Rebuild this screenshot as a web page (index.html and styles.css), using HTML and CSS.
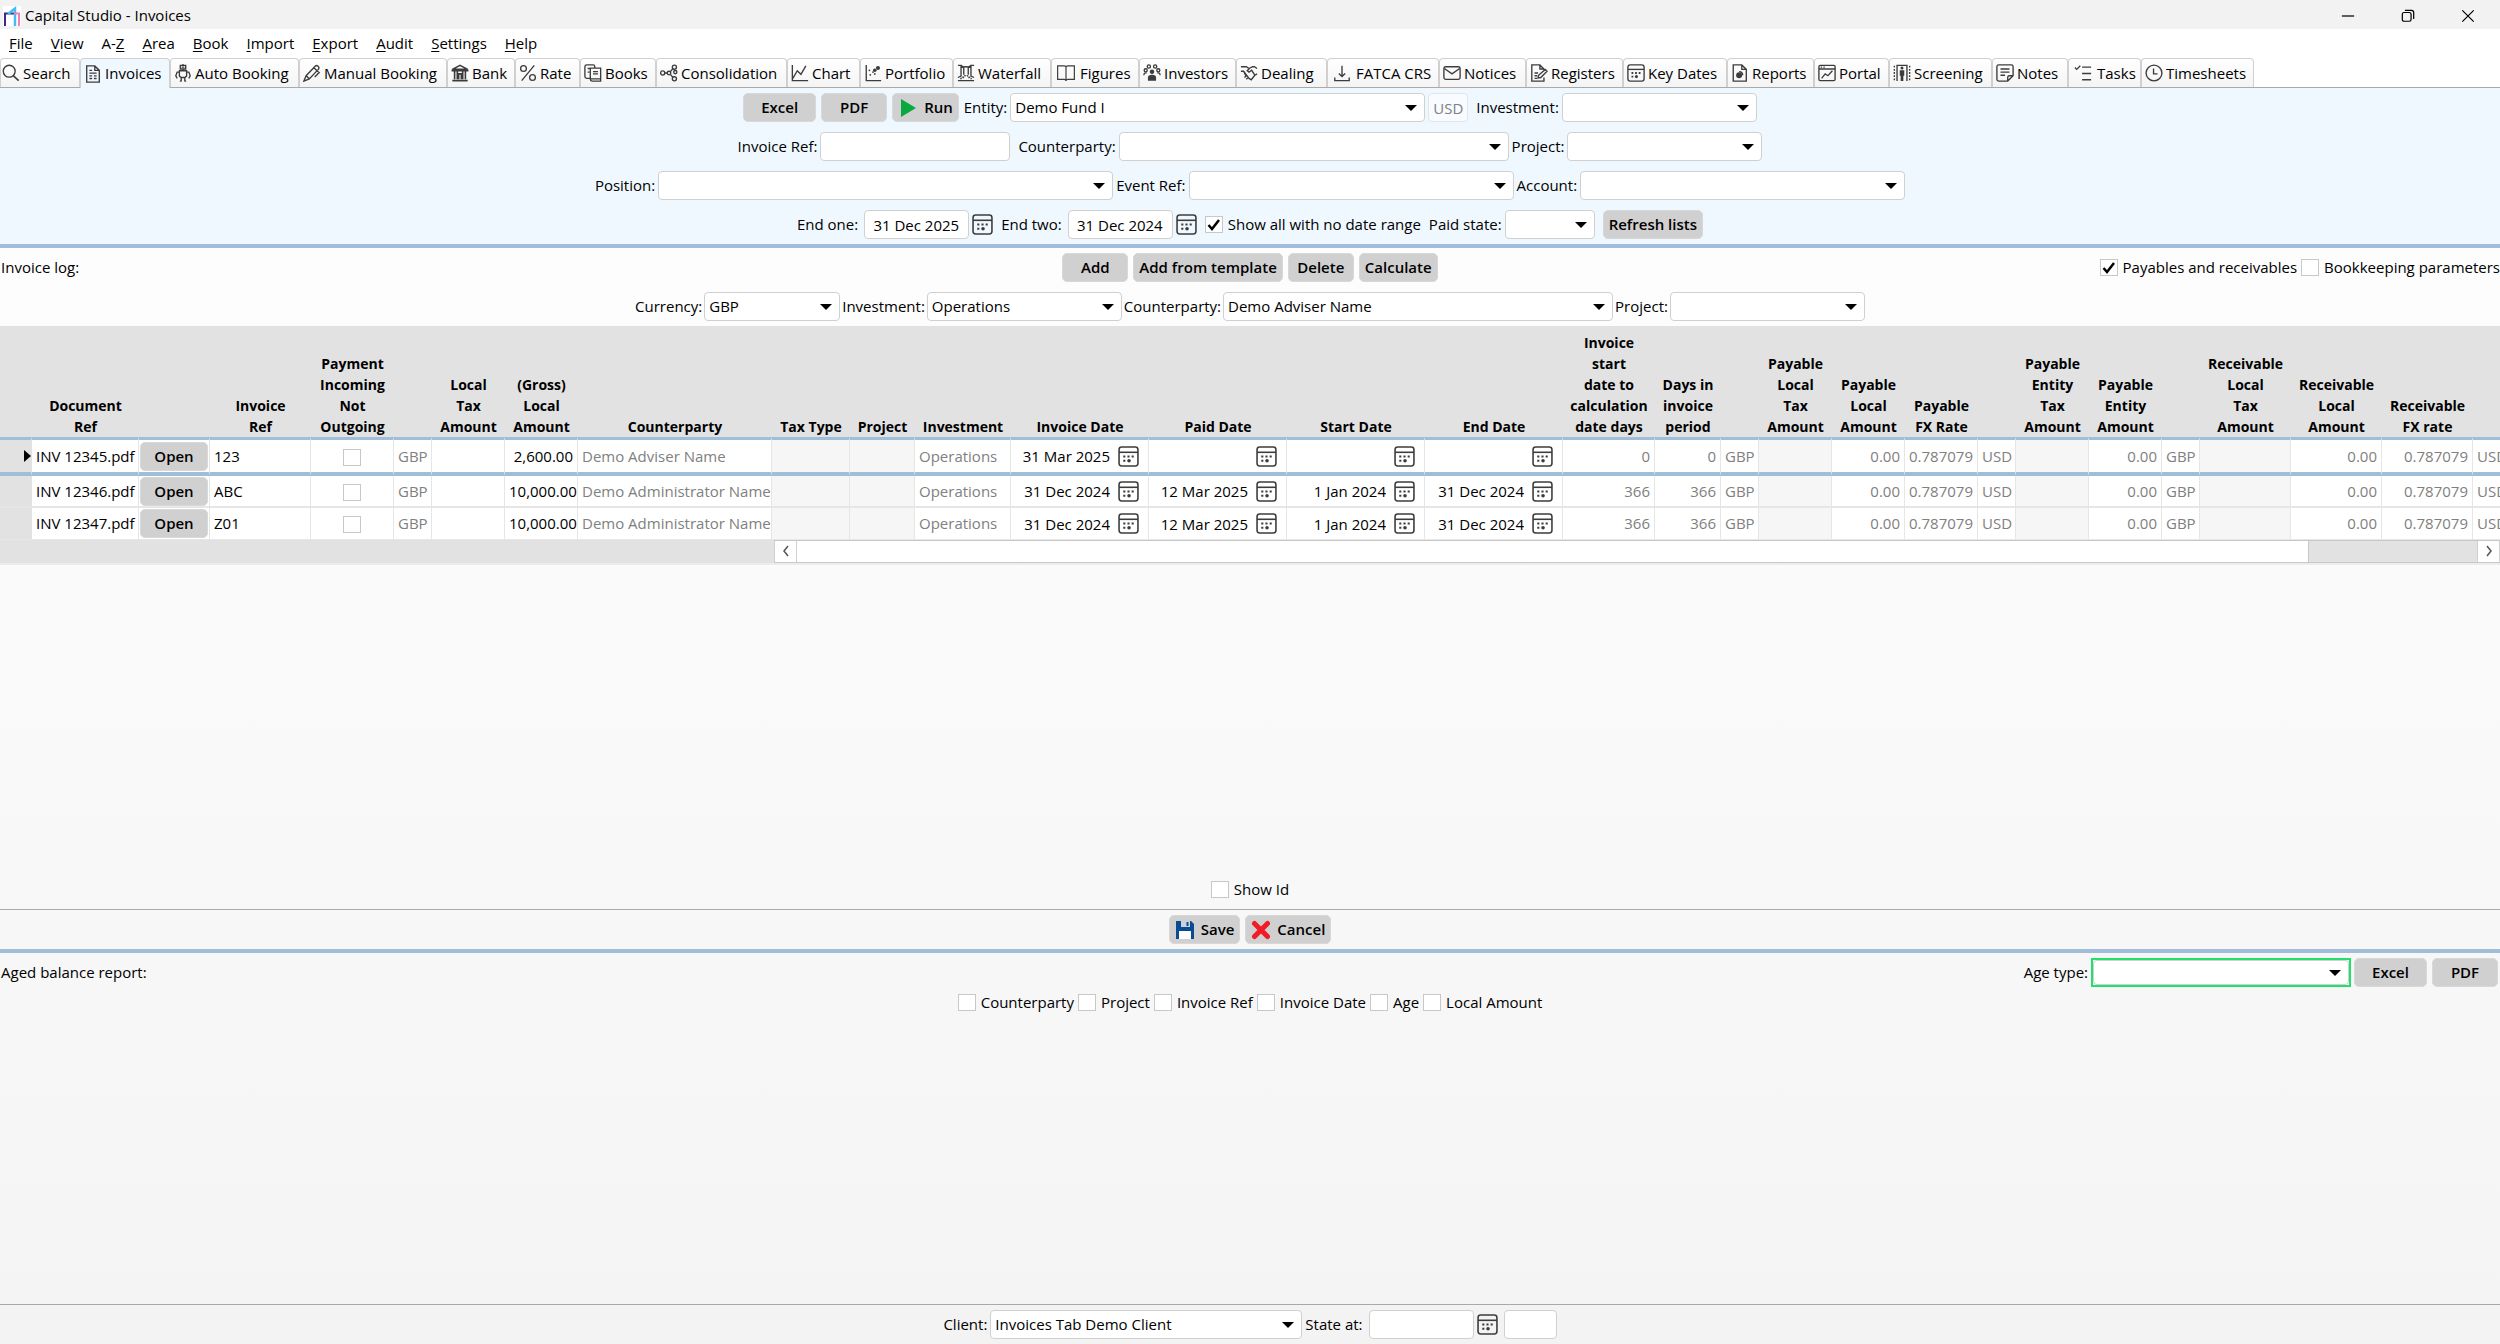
FILE: index.html
```html
<!DOCTYPE html>
<html lang="en">
<head>
  <meta charset="UTF-8" />
  <meta name="viewport" content="width=device-width, initial-scale=1.0" />
  <title>Capital Studio - Invoices</title>
  <link rel="stylesheet" href="styles.css">
</head>
<body>
  <!-- icon sprite -->
  <svg class="sprite" aria-hidden="true">
    <symbol id="i-search" viewBox="0 0 20 20"><circle cx="8" cy="8" r="6.6"/><path d="M12.5 13l6 5.5" stroke-width="1.8"/></symbol>
    <symbol id="i-invoice" viewBox="0 0 20 20"><path d="M3 1h9l5 5v13H3zM12 1v5h5M6 6h3M6 9h8M6 12h3M11 12h3M6 15h3M11 15h3"/></symbol>
    <symbol id="i-robot" viewBox="0 0 20 20"><path d="M7 1.5h6v4H7zM10 0v1M10 5.500v2M6 7.500h8v6l-2 1.500H8l-2-1.500zM6 9H3.500L2 13l1.500 3M14 9h2.500l1.500 4-1.500 3M8 15v4M12 15v4M6.500 19h2M11.500 19h2M8.500 3.500h3" /></symbol>
    <symbol id="i-pen" viewBox="0 0 20 20"><path d="M1 19l2.500-6L13.500 2.500c2-2 5.500 1 3.500 3.500L7 16.500zM3.500 13L7 16.500M12 4l4 4M16 8l2 1.500-5 5"/></symbol>
    <symbol id="i-bank" viewBox="0 0 20 20"><path d="M1.500 6L10 1.500 18.500 6zM1.500 6v1.500h17V6M4 8v9M7 8v9M13 8v9M16 8v9M8.500 17v-6h3v6M1.500 18.500h17" stroke-width="1.800"/></symbol>
    <symbol id="i-percent" viewBox="0 0 20 20"><path d="M17 1.500L3 18.500"/><circle cx="5" cy="5" r="3.200"/><circle cx="15" cy="15" r="3.200"/></symbol>
    <symbol id="i-books" viewBox="0 0 20 20"><path d="M7 16H3q-2 0-2-2V3q0-2 2-2h7q2 0 2 2v1M4 5h3M4 9h2M7 4.500h11.500V19H9q-2 0-2-2zM10 8.500h5.500M10 11h5.500M7 16.500h11.500"/></symbol>
    <symbol id="i-nodes" viewBox="0 0 20 20"><circle cx="3" cy="10" r="2.300"/><circle cx="10" cy="10" r="2"/><circle cx="16" cy="3.500" r="2.300"/><circle cx="17" cy="9" r="1.800"/><circle cx="16" cy="16.500" r="2.300"/><path d="M5.300 10H8M11.500 8.500l3-3.500M11.500 11.500l3 3.500"/></symbol>
    <symbol id="i-chart" viewBox="0 0 20 20"><path d="M1.500 1v17.500H19M2 16l5-8.500 4 4L16.500 2"/></symbol>
    <symbol id="i-scatter" viewBox="0 0 20 20"><path d="M2.500 1v17.500H19"/><g class="solid"><circle cx="6" cy="7" r="1"/><circle cx="7" cy="12" r="1"/><circle cx="10" cy="9" r="1"/><circle cx="12" cy="7" r="2"/><circle cx="15.500" cy="4.500" r="2.300"/><circle cx="12" cy="11" r="1"/></g></symbol>
    <symbol id="i-waterfall" viewBox="0 0 20 20"><path d="M1 1.500h3.500v12L1 15M19 1.500h-3.500v12L19 15M4.500 4q5.500-2 11 0M4.500 1.500l3 2.500M15.500 1.500l-3 2.500M7.500 4v8M12.500 4v8M1 18.500h18" /><path d="M4 17q1-3 3-2 1-3 3-1.500 2-1.500 3 1.500 2-1 3 2" stroke-dasharray="2 1"/></symbol>
    <symbol id="i-openbook" viewBox="0 0 20 20"><path d="M.7 2H8q2 0 2 2v15q0-2-2-2H.700zM19.300 2H12q-2 0-2 2v15q0-2 2-2h7.300z" stroke-width="1.300"/></symbol>
    <symbol id="i-people" viewBox="0 0 20 20"><circle cx="6.500" cy="2.800" r="1.800"/><circle cx="13.500" cy="2.800" r="1.800"/><circle cx="3" cy="7" r="1.700"/><circle cx="17" cy="7" r="1.700"/><path d="M1 12.500q0-3 3-2.500M19 12.500q0-3-3-2.500"/><g class="solid"><circle cx="10" cy="8.500" r="2.500"/><path d="M5.500 18.500V15q0-3 4.500-3t4.500 3v3.500z"/></g></symbol>
    <symbol id="i-hands" viewBox="0 0 20 20"><path d="M1 3h6l3 2 4-2h2l3 2M1 8h3l6 8 2.500 1.500 4-5L13 7l-3 2-2-1.500L10.500 5M16.500 12.500L19 11M4 8l3 6M7 13l-2 2M9 15l-2 2"/></symbol>
    <symbol id="i-download" viewBox="0 0 20 20"><path d="M10 2v12M6.500 10.500L10 14l3.500-3.500M2 15v3.500h16V15"/></symbol>
    <symbol id="i-mail" viewBox="0 0 20 20"><rect x="1" y="3" width="18" height="14" rx="2"/><path d="M1.500 5l8.500 6 8.500-6"/></symbol>
    <symbol id="i-register" viewBox="0 0 20 20"><path d="M15.500 15v4H2V1h9l4.500 4.500V8M11 1v4.500h4.500M5 10h4M5 13h3M9 15.500l.5-3L17 6l2 2-7 7zM5 16h3"/></symbol>
    <symbol id="i-calendar" viewBox="0 0 20 20"><rect x="1" y="1" width="18" height="18" rx="2.500"/><path d="M1 6h18"/><path d="M5 10h2M9 10h2M13 10h2M5 14h2" stroke-width="2"/><circle class="solid" cx="10.500" cy="14" r="1.700"/></symbol>
    <symbol id="i-report" viewBox="0 0 20 20"><path d="M2.500 1h9.500l5 5v13H2.500zM12 1v5h5"/><circle class="solid" cx="9" cy="12.500" r="3.300"/><path d="M9 8.500q4 0 4 4"/></symbol>
    <symbol id="i-portal" viewBox="0 0 20 20"><rect x="1" y="1.500" width="18" height="17" rx="1.500"/><path d="M1 5.500h18M3 3.500h1.500M6 3.500h1.500M4 16l4-5 3 2 5-5.500"/></symbol>
    <symbol id="i-scan" viewBox="0 0 20 20"><path d="M4.500 19V1.500h11V19"/><path d="M1.500 2v17M18.500 2v17" stroke-dasharray="2 1.500"/><g class="solid"><circle cx="10" cy="4.500" r="1.700"/><path d="M7.500 7h5v6h-1v6H8.500v-6h-1z"/></g></symbol>
    <symbol id="i-note" viewBox="0 0 20 20"><path d="M3 1h14q2 0 2 2v10l-6 6H3q-2 0-2-2V3q0-2 2-2zM19 13h-4q-2 0-2 2v4M5 5.500h10M5 9h10M5 12.500h5"/></symbol>
    <symbol id="i-tasks" viewBox="0 0 20 20"><path d="M1 4l2 2 4-4M9 3.500h10M9 10.500h10M9 17.500h10"/></symbol>
    <symbol id="i-clock" viewBox="0 0 20 20"><circle cx="10" cy="10" r="8.800"/><path d="M9.500 5v6H14"/></symbol>
  </svg>

  <header class="title-bar">
    <svg class="logo" viewBox="0 0 18 20" aria-hidden="true">
      <path d="M2 20V7.500h11" fill="none" stroke="#3b2a8c" stroke-width="2"/>
      <path d="M5 8l7-5.500V20" fill="none" stroke="#45bdee" stroke-width="2.500"/>
      <path d="M11 7.500h5V20" fill="none" stroke="#f07fb4" stroke-width="2"/>
    </svg>
    <h1>Capital Studio - Invoices</h1>
    <div class="window-buttons">
      <button type="button" aria-label="Minimise"><svg viewBox="0 0 16 16"><path d="M1 8h14"/></svg></button>
      <button type="button" aria-label="Restore"><svg viewBox="0 0 16 16"><rect x="1.500" y="4" width="10" height="10" rx="2"/><path d="M4.500 1.500H12q2.500 0 2.500 2.500v7.500"/></svg></button>
      <button type="button" aria-label="Close"><svg viewBox="0 0 16 16"><path d="M1.500 1.500l13 13M14.500 1.500l-13 13"/></svg></button>
    </div>
  </header>

  <nav class="menu">
    <a href="#"><u>F</u>ile</a>
    <a href="#"><u>V</u>iew</a>
    <a href="#">A-<u>Z</u></a>
    <a href="#"><u>A</u>rea</a>
    <a href="#"><u>B</u>ook</a>
    <a href="#"><u>I</u>mport</a>
    <a href="#"><u>E</u>xport</a>
    <a href="#"><u>A</u>udit</a>
    <a href="#"><u>S</u>ettings</a>
    <a href="#"><u>H</u>elp</a>
  </nav>

  <nav class="tabs">
    <a href="#" class="tab"><svg class="icon"><use href="#i-search"/></svg>Search</a>
    <a href="#" class="tab active"><svg class="icon"><use href="#i-invoice"/></svg>Invoices</a>
    <a href="#" class="tab"><svg class="icon"><use href="#i-robot"/></svg>Auto Booking</a>
    <a href="#" class="tab"><svg class="icon"><use href="#i-pen"/></svg>Manual Booking</a>
    <a href="#" class="tab"><svg class="icon"><use href="#i-bank"/></svg>Bank</a>
    <a href="#" class="tab"><svg class="icon"><use href="#i-percent"/></svg>Rate</a>
    <a href="#" class="tab"><svg class="icon"><use href="#i-books"/></svg>Books</a>
    <a href="#" class="tab"><svg class="icon"><use href="#i-nodes"/></svg>Consolidation</a>
    <a href="#" class="tab"><svg class="icon"><use href="#i-chart"/></svg>Chart</a>
    <a href="#" class="tab"><svg class="icon"><use href="#i-scatter"/></svg>Portfolio</a>
    <a href="#" class="tab"><svg class="icon"><use href="#i-waterfall"/></svg>Waterfall</a>
    <a href="#" class="tab"><svg class="icon wide"><use href="#i-openbook"/></svg>Figures</a>
    <a href="#" class="tab"><svg class="icon"><use href="#i-people"/></svg>Investors</a>
    <a href="#" class="tab"><svg class="icon"><use href="#i-hands"/></svg>Dealing</a>
    <a href="#" class="tab"><svg class="icon wide"><use href="#i-download"/></svg>FATCA CRS</a>
    <a href="#" class="tab"><svg class="icon"><use href="#i-mail"/></svg>Notices</a>
    <a href="#" class="tab"><svg class="icon"><use href="#i-register"/></svg>Registers</a>
    <a href="#" class="tab"><svg class="icon"><use href="#i-calendar"/></svg>Key Dates</a>
    <a href="#" class="tab"><svg class="icon"><use href="#i-report"/></svg>Reports</a>
    <a href="#" class="tab"><svg class="icon"><use href="#i-portal"/></svg>Portal</a>
    <a href="#" class="tab"><svg class="icon"><use href="#i-scan"/></svg>Screening</a>
    <a href="#" class="tab"><svg class="icon"><use href="#i-note"/></svg>Notes</a>
    <a href="#" class="tab"><svg class="icon wide"><use href="#i-tasks"/></svg>Tasks</a>
    <a href="#" class="tab"><svg class="icon"><use href="#i-clock"/></svg>Timesheets</a>
  </nav>

  <form class="filters">
    <div class="form-row">
      <button type="button" class="btn excel">Excel</button>
      <button type="button" class="btn">PDF</button>
      <button type="button" class="btn with-icon"><svg class="btn-icon" viewBox="0 0 20 20"><path d="M3 1l15 9-15 9z" fill="#0aa83f"/></svg>Run</button>
      <label for="entity">Entity:</label>
      <select id="entity" class="w-415"><option>Demo Fund I</option></select>
      <input type="text" class="w-40" value="USD" aria-label="Entity currency" disabled />
      <label for="investment" class="spaced">Investment:</label>
      <select id="investment" class="w-195"><option></option></select>
    </div>
    <div class="form-row">
      <label for="invoice-ref">Invoice Ref:</label>
      <input type="text" id="invoice-ref" class="w-190" />
      <label for="counterparty" class="spaced">Counterparty:</label>
      <select id="counterparty" class="w-390"><option></option></select>
      <label for="project">Project:</label>
      <select id="project" class="w-195"><option></option></select>
    </div>
    <div class="form-row">
      <label for="position">Position:</label>
      <select id="position" class="w-455"><option></option></select>
      <label for="event-ref">Event Ref:</label>
      <select id="event-ref" class="w-325"><option></option></select>
      <label for="account">Account:</label>
      <select id="account" class="w-325"><option></option></select>
    </div>
    <div class="form-row">
      <label for="end-one">End one:</label>
      <input type="text" id="end-one" class="date w-105" value="31 Dec 2025" />
      <button type="button" class="cal" aria-label="Pick end one"><svg><use href="#i-calendar"/></svg></button>
      <label for="end-two" class="spaced">End two:</label>
      <input type="text" id="end-two" class="date w-105" value="31 Dec 2024" />
      <button type="button" class="cal" aria-label="Pick end two"><svg><use href="#i-calendar"/></svg></button>
      <label class="check spaced"><input type="checkbox" checked />Show all with no date range</label>
      <label for="paid-state" class="spaced">Paid state:</label>
      <select id="paid-state" class="w-90"><option></option></select>
      <button type="button" class="btn spaced">Refresh lists</button>
    </div>
  </form>

  <main class="log">
    <div class="toolbar">
      <h2>Invoice log:</h2>
      <div class="form-row">
        <button type="button" class="btn">Add</button>
        <button type="button" class="btn">Add from template</button>
        <button type="button" class="btn">Delete</button>
        <button type="button" class="btn">Calculate</button>
      </div>
      <div class="toolbar-end">
        <label class="check"><input type="checkbox" checked />Payables and receivables</label>
        <label class="check"><input type="checkbox" />Bookkeeping parameters</label>
      </div>
    </div>
    <div class="form-row defaults">
      <label for="log-currency">Currency:</label>
      <select id="log-currency" class="w-136"><option>GBP</option></select>
      <label for="log-investment">Investment:</label>
      <select id="log-investment" class="w-195"><option>Operations</option></select>
      <label for="log-counterparty">Counterparty:</label>
      <select id="log-counterparty" class="w-390"><option>Demo Adviser Name</option></select>
      <label for="log-project">Project:</label>
      <select id="log-project" class="w-195"><option></option></select>
    </div>

    <div class="grid">
      <table>
        <colgroup>
          <col class="c-marker"><col class="c-doc"><col class="c-open"><col class="c-ref"><col class="c-pay">
          <col class="c-cur"><col class="c-amount"><col class="c-amount"><col class="c-party"><col class="c-tax">
          <col class="c-project"><col class="c-invest">
          <col class="c-date"><col class="c-date"><col class="c-date"><col class="c-date">
          <col class="c-calc"><col class="c-days"><col class="c-cur">
          <col class="c-amount"><col class="c-amount"><col class="c-amount"><col class="c-cur">
          <col class="c-amount"><col class="c-amount"><col class="c-cur">
          <col class="c-recv"><col class="c-recv"><col class="c-recv"><col class="c-cur">
        </colgroup>
        <thead>
          <tr>
            <th></th>
            <th>Document<br>Ref</th>
            <th></th>
            <th>Invoice<br>Ref</th>
            <th>Payment<br>Incoming<br>Not<br>Outgoing</th>
            <th></th>
            <th>Local<br>Tax<br>Amount</th>
            <th>(Gross)<br>Local<br>Amount</th>
            <th>Counterparty</th>
            <th>Tax Type</th>
            <th>Project</th>
            <th>Investment</th>
            <th>Invoice Date</th>
            <th>Paid Date</th>
            <th>Start Date</th>
            <th>End Date</th>
            <th>Invoice<br>start<br>date to<br>calculation<br>date days</th>
            <th>Days in<br>invoice<br>period</th>
            <th></th>
            <th>Payable<br>Local<br>Tax<br>Amount</th>
            <th>Payable<br>Local<br>Amount</th>
            <th>Payable<br>FX Rate</th>
            <th></th>
            <th>Payable<br>Entity<br>Tax<br>Amount</th>
            <th>Payable<br>Entity<br>Amount</th>
            <th></th>
            <th>Receivable<br>Local<br>Tax<br>Amount</th>
            <th>Receivable<br>Local<br>Amount</th>
            <th>Receivable<br>FX rate</th>
            <th></th>
          </tr>
        </thead>
        <tbody>
          <tr class="selected">
            <td class="marker"><svg viewBox="0 0 7 12"><path d="M0 0l7 6-7 6z"/></svg></td>
            <td>INV 12345.pdf</td>
            <td class="open"><button type="button" class="btn">Open</button></td>
            <td>123</td>
            <td class="tick"><input type="checkbox" aria-label="Payment incoming" /></td>
            <td class="dim">GBP</td>
            <td></td>
            <td class="num">2,600.00</td>
            <td class="dim">Demo Adviser Name</td>
            <td class="off"></td>
            <td class="off"></td>
            <td class="dim">Operations</td>
            <td><div class="date-cell"><input type="text" value="31 Mar 2025" aria-label="Invoice date" /><button type="button" class="cal" aria-label="Pick date"><svg><use href="#i-calendar"/></svg></button></div></td>
            <td><div class="date-cell"><input type="text" aria-label="Paid date" /><button type="button" class="cal" aria-label="Pick date"><svg><use href="#i-calendar"/></svg></button></div></td>
            <td><div class="date-cell"><input type="text" aria-label="Start date" /><button type="button" class="cal" aria-label="Pick date"><svg><use href="#i-calendar"/></svg></button></div></td>
            <td><div class="date-cell"><input type="text" aria-label="End date" /><button type="button" class="cal" aria-label="Pick date"><svg><use href="#i-calendar"/></svg></button></div></td>
            <td class="dim num">0</td>
            <td class="dim num">0</td>
            <td class="dim">GBP</td>
            <td class="off"></td>
            <td class="dim num">0.00</td>
            <td class="dim num">0.787079</td>
            <td class="dim">USD</td>
            <td class="off"></td>
            <td class="dim num">0.00</td>
            <td class="dim">GBP</td>
            <td class="off"></td>
            <td class="dim num">0.00</td>
            <td class="dim num">0.787079</td>
            <td class="dim">USD</td>
          </tr>
          <tr>
            <td class="marker"></td>
            <td>INV 12346.pdf</td>
            <td class="open"><button type="button" class="btn">Open</button></td>
            <td>ABC</td>
            <td class="tick"><input type="checkbox" aria-label="Payment incoming" /></td>
            <td class="dim">GBP</td>
            <td></td>
            <td class="num">10,000.00</td>
            <td class="dim">Demo Administrator Name</td>
            <td class="off"></td>
            <td class="off"></td>
            <td class="dim">Operations</td>
            <td><div class="date-cell"><input type="text" value="31 Dec 2024" aria-label="Invoice date" /><button type="button" class="cal" aria-label="Pick date"><svg><use href="#i-calendar"/></svg></button></div></td>
            <td><div class="date-cell"><input type="text" value="12 Mar 2025" aria-label="Paid date" /><button type="button" class="cal" aria-label="Pick date"><svg><use href="#i-calendar"/></svg></button></div></td>
            <td><div class="date-cell"><input type="text" value="1 Jan 2024" aria-label="Start date" /><button type="button" class="cal" aria-label="Pick date"><svg><use href="#i-calendar"/></svg></button></div></td>
            <td><div class="date-cell"><input type="text" value="31 Dec 2024" aria-label="End date" /><button type="button" class="cal" aria-label="Pick date"><svg><use href="#i-calendar"/></svg></button></div></td>
            <td class="dim num">366</td>
            <td class="dim num">366</td>
            <td class="dim">GBP</td>
            <td class="off"></td>
            <td class="dim num">0.00</td>
            <td class="dim num">0.787079</td>
            <td class="dim">USD</td>
            <td class="off"></td>
            <td class="dim num">0.00</td>
            <td class="dim">GBP</td>
            <td class="off"></td>
            <td class="dim num">0.00</td>
            <td class="dim num">0.787079</td>
            <td class="dim">USD</td>
          </tr>
          <tr>
            <td class="marker"></td>
            <td>INV 12347.pdf</td>
            <td class="open"><button type="button" class="btn">Open</button></td>
            <td>Z01</td>
            <td class="tick"><input type="checkbox" aria-label="Payment incoming" /></td>
            <td class="dim">GBP</td>
            <td></td>
            <td class="num">10,000.00</td>
            <td class="dim">Demo Administrator Name</td>
            <td class="off"></td>
            <td class="off"></td>
            <td class="dim">Operations</td>
            <td><div class="date-cell"><input type="text" value="31 Dec 2024" aria-label="Invoice date" /><button type="button" class="cal" aria-label="Pick date"><svg><use href="#i-calendar"/></svg></button></div></td>
            <td><div class="date-cell"><input type="text" value="12 Mar 2025" aria-label="Paid date" /><button type="button" class="cal" aria-label="Pick date"><svg><use href="#i-calendar"/></svg></button></div></td>
            <td><div class="date-cell"><input type="text" value="1 Jan 2024" aria-label="Start date" /><button type="button" class="cal" aria-label="Pick date"><svg><use href="#i-calendar"/></svg></button></div></td>
            <td><div class="date-cell"><input type="text" value="31 Dec 2024" aria-label="End date" /><button type="button" class="cal" aria-label="Pick date"><svg><use href="#i-calendar"/></svg></button></div></td>
            <td class="dim num">366</td>
            <td class="dim num">366</td>
            <td class="dim">GBP</td>
            <td class="off"></td>
            <td class="dim num">0.00</td>
            <td class="dim num">0.787079</td>
            <td class="dim">USD</td>
            <td class="off"></td>
            <td class="dim num">0.00</td>
            <td class="dim">GBP</td>
            <td class="off"></td>
            <td class="dim num">0.00</td>
            <td class="dim num">0.787079</td>
            <td class="dim">USD</td>
          </tr>
        </tbody>
      </table>
      <div class="scrollbar">
        <button type="button" aria-label="Scroll left"><svg viewBox="0 0 8 12"><path d="M6 1L2 6l4 5"/></svg></button>
        <div class="track"><div class="thumb"></div></div>
        <button type="button" aria-label="Scroll right"><svg viewBox="0 0 8 12"><path d="M2 1l4 5-4 5"/></svg></button>
      </div>
    </div>

    <div class="form-row show-id">
      <label class="check"><input type="checkbox" />Show Id</label>
    </div>
  </main>

  <div class="form-row actions">
    <button type="button" class="btn with-icon"><svg class="btn-icon" viewBox="0 0 20 20"><path d="M1 1h15l3 3v15H1z" fill="#0a4c92"/><path d="M6 1h9v6H6z" fill="#c9d3de"/><path d="M11.500 2h2v4h-2z" fill="#0a4c92"/><path d="M4 11h12v8H4z" fill="#fff"/></svg>Save</button>
    <button type="button" class="btn with-icon"><svg class="btn-icon" viewBox="0 0 20 20"><path d="M3.500 3.500l13 13M16.500 3.500l-13 13" stroke="#f01c26" stroke-width="5" stroke-linecap="round"/></svg>Cancel</button>
  </div>

  <section class="aged">
    <div class="aged-head">
      <h2>Aged balance report:</h2>
      <div class="form-row">
        <label for="age-type">Age type:</label>
        <span class="focus-ring"><select id="age-type" class="w-256"><option></option></select></span>
        <button type="button" class="btn excel">Excel</button>
        <button type="button" class="btn">PDF</button>
      </div>
    </div>
    <div class="form-row aged-columns">
      <label class="check"><input type="checkbox" />Counterparty</label>
      <label class="check"><input type="checkbox" />Project</label>
      <label class="check"><input type="checkbox" />Invoice Ref</label>
      <label class="check"><input type="checkbox" />Invoice Date</label>
      <label class="check"><input type="checkbox" />Age</label>
      <label class="check"><input type="checkbox" />Local Amount</label>
    </div>
  </section>

  <footer class="form-row status">
    <label for="client">Client:</label>
    <select id="client" class="w-312"><option>Invoices Tab Demo Client</option></select>
    <label for="state-at">State at:</label>
    <input type="text" id="state-at" class="date w-105" />
    <button type="button" class="cal" aria-label="Pick state date"><svg><use href="#i-calendar"/></svg></button>
    <input type="text" class="time" aria-label="State time" />
  </footer>
</body>
</html>
```
FILE: styles.css
```css
* {
  box-sizing: border-box;
}

body {
  margin: 0;
  min-height: 100vh;
  display: flex;
  flex-direction: column;
  overflow-x: hidden;
  font-family: 'Segoe UI', 'Open Sans', 'Noto Sans', sans-serif;
  font-size: 15px;
  line-height: 21px;
  color: #000;
  background: linear-gradient(#fff, #f4f4f4);
}

button, input, select {
  font: inherit;
  color: inherit;
}

button {
  cursor: pointer;
}

a {
  color: inherit;
  text-decoration: none;
}

h1, h2 {
  margin: 0;
  font-size: 15px;
  font-weight: 400;
}

label {
  white-space: nowrap;
}

.sprite {
  display: none;
}

symbol {
  fill: none;
  stroke: #3c3c3c;
  stroke-width: 1.5;
}

symbol .solid {
  fill: #3c3c3c;
  stroke: none;
}

/* title bar */

.title-bar {
  display: flex;
  align-items: center;
  height: 29px;
  padding: 0 2px 0 3px;
  background: #f2f2f2;
}

.logo {
  width: 18px;
  height: 20px;
  margin: 2px 4px 0 0;
  background: #fff;
}

.title-bar h1 {
  padding-top: 2px;
}

.window-buttons {
  display: flex;
  margin-left: auto;
}

.window-buttons button {
  width: 60px;
  height: 28px;
  padding: 0;
  border: 0;
  background: none;
}

.window-buttons svg {
  width: 14px;
  height: 14px;
  vertical-align: middle;
  fill: none;
  stroke: #000;
  stroke-width: 1.4;
}

/* menu and tabs */

.menu {
  display: flex;
  gap: 18px;
  height: 29px;
  padding: 4px 9px;
  background: #fff;
}

.menu u {
  text-underline-offset: 2px;
}

.tabs {
  display: grid;
  grid-template-columns:
    80px 90px 129px 148px 68px 65px 76px 131px 73px 93px 98px 88px
    97px 91px 112px 87px 97px 104px 87px 75px 103px 76px 73px 113px;
  height: 30px;
  background: #fff;
  border-bottom: 1px solid #a9a9a9;
}

.tab {
  display: flex;
  align-items: center;
  gap: 3px;
  height: 29px;
  padding-left: 3px;
  white-space: nowrap;
  border: 1px solid #d0d0d0;
  border-width: 1px 1px 0;
  border-radius: 4px 4px 0 0;
  background: linear-gradient(#fff, #f4f4f4);
}

.tab:first-child {
  padding-left: 1px;
}

.tab.active {
  height: 30px;
  background: #f0f8ff;
}

.icon {
  flex: none;
  width: 18px;
  height: 18px;
}

.icon.wide {
  width: 22px;
}

/* form parts */

.form-row {
  display: flex;
  justify-content: center;
  align-items: center;
  gap: 3px;
  min-height: 29px;
}

.spaced {
  margin-left: 5px;
}

select,
input[type="text"] {
  height: 29px;
  padding: 0 4px;
  border: 1px solid #d0d0d0;
  border-radius: 4px;
  background-color: #fff;
  outline: none;
}

select {
  appearance: none;
  background-image: url("data:image/svg+xml,%3Csvg xmlns='http://www.w3.org/2000/svg' viewBox='0 0 12 6'%3E%3Cpath d='M0 0h12L6 6z'/%3E%3C/svg%3E");
  background-repeat: no-repeat;
  background-position: right 7px center;
  background-size: 12px 6px;
}

input[type="text"]:disabled {
  color: #808080;
  background-color: #f8fbff;
  border-color: #e2e6ea;
}

input.date {
  text-align: right;
  padding-right: 9px;
  margin-left: 3px;
}

input.time {
  width: 53px;
  margin-left: 3px;
}

.w-40 { width: 40px; }
.w-90 { width: 90px; }
.w-105 { width: 105px; }
.w-136 { width: 136px; }
.w-190 { width: 190px; }
.w-195 { width: 195px; }
.w-256 { width: 256px; }
.w-312 { width: 312px; }
.w-325 { width: 325px; }
.w-390 { width: 390px; }
.w-415 { width: 415px; }
.w-455 { width: 455px; }

.btn {
  min-width: 66px;
  height: 29px;
  margin-right: 2px;
  padding: 0 5px;
  border: 1px solid #d8d8d8;
  border-radius: 5px;
  background: #d0d0d0;
  font-weight: 600;
  white-space: nowrap;
}

.btn:last-child {
  margin-right: 0;
}

.btn.excel {
  min-width: 73px;
}

.btn.with-icon {
  display: flex;
  align-items: center;
  gap: 6px;
}

.btn-icon {
  width: 20px;
  height: 20px;
}

.cal {
  width: 21px;
  height: 21px;
  padding: 0;
  border: 0;
  background: none;
}

.cal svg {
  display: block;
  width: 21px;
  height: 21px;
}

.check {
  display: flex;
  align-items: center;
  gap: 5px;
}

input[type="checkbox"] {
  appearance: none;
  flex: none;
  width: 18px;
  height: 17px;
  margin: 0;
  border: 1px solid #c8c8c8;
  background: #fff;
}

input[type="checkbox"]:checked {
  background: #fff url("data:image/svg+xml,%3Csvg xmlns='http://www.w3.org/2000/svg' viewBox='0 0 16 15'%3E%3Cpath d='M2.500 8l3.500 4L13 3' fill='none' stroke='%23000' stroke-width='2.500'/%3E%3C/svg%3E") center / 16px 15px no-repeat;
}

/* report filters */

.filters {
  display: flex;
  flex-direction: column;
  gap: 10px;
  padding: 5px 0;
  background: #f0f8ff;
  border-bottom: 4px solid #a0bdd9;
}

/* invoice log */

.log {
  flex: 19 1 0;
  display: flex;
  flex-direction: column;
  padding-top: 5px;
  border-bottom: 1px solid #a9a9a9;
}

.toolbar {
  display: grid;
  grid-template-columns: 1fr auto 1fr;
  align-items: center;
}

.toolbar h2,
.aged h2 {
  padding-left: 1px;
}

.toolbar-end {
  display: flex;
  justify-content: flex-end;
  gap: 4px;
}

.defaults {
  gap: 2px;
  margin: 10px 0 5px;
}

.grid {
  overflow: hidden;
  background: #e2e2e2;
  border-bottom: 2px solid #ececec;
}

table {
  table-layout: fixed;
  width: 2511px;
  border-collapse: separate;
  border-spacing: 0;
}

.c-marker { width: 32px; }
.c-doc { width: 107px; }
.c-open { width: 71px; }
.c-ref { width: 101px; }
.c-pay { width: 83px; }
.c-cur { width: 38px; }
.c-amount { width: 73px; }
.c-party { width: 194px; }
.c-tax { width: 78px; }
.c-project { width: 65px; }
.c-invest { width: 96px; }
.c-date { width: 138px; }
.c-calc { width: 92px; }
.c-days { width: 66px; }
.c-recv { width: 91px; }

th {
  height: 111px;
  padding: 0;
  vertical-align: bottom;
  font-weight: 700;
  font-size: 14px;
  white-space: nowrap;
}

td {
  height: 32px;
  padding: 0 4px;
  white-space: nowrap;
  background: #fff;
  border-right: 1px solid #e6e6e6;
  border-bottom: 2px solid #e6e6e6;
}

tbody tr:last-child td {
  border-bottom-width: 1px;
}

.selected td {
  height: 39px;
  border-top: 3px solid #a0bdd9;
  border-bottom: 4px solid #a0bdd9;
}

td.marker {
  padding: 0;
  text-align: right;
  background: #e2e2e2;
  border-right-color: #e2e2e2;
}

.marker svg {
  width: 7px;
  height: 12px;
}

td.open {
  padding: 0 1px;
}

.open .btn {
  display: block;
  width: 100%;
}

td.tick {
  text-align: center;
}

.tick input {
  vertical-align: middle;
}

td.dim {
  color: #808080;
}

td.off {
  background: #f6f6f6;
}

td.num {
  text-align: right;
}

.date-cell {
  display: flex;
  align-items: center;
  gap: 8px;
  padding-right: 5px;
}

.date-cell input[type="text"] {
  flex: 1;
  min-width: 0;
  padding: 0;
  border: 0;
  background: none;
  text-align: right;
}

.scrollbar {
  display: flex;
  height: 23px;
  margin-left: 774px;
  border: 1px solid #c8c8c8;
  border-width: 1px 0;
}

.scrollbar button {
  width: 23px;
  padding: 0;
  border: 1px solid #d0d0d0;
  border-width: 0 1px;
  background: #fff;
}

.scrollbar svg {
  width: 8px;
  height: 12px;
  fill: none;
  stroke: #555;
  stroke-width: 1.5;
}

.track {
  flex: 1;
}

.thumb {
  width: 90%;
  height: 100%;
  background: #fff;
  border-right: 1px solid #c8c8c8;
}

.show-id {
  margin-top: auto;
  padding-bottom: 4px;
  min-height: 36px;
}

.actions {
  padding: 5px 0;
  border-bottom: 4px solid #a0bdd9;
}

/* aged balance report */

.aged {
  flex: 10 1 0;
  padding-top: 5px;
}

.aged-head {
  display: flex;
  justify-content: space-between;
  align-items: center;
  padding-right: 2px;
}

.focus-ring {
  display: flex;
  border: 2px solid #21e06b;
}

.focus-ring select {
  height: 25px;
}

.aged-columns {
  gap: 4px;
  padding-top: 2px;
}

.status {
  padding: 5px 0;
  background: #f3f3f3;
  border-top: 1px solid #a9a9a9;
}
```
